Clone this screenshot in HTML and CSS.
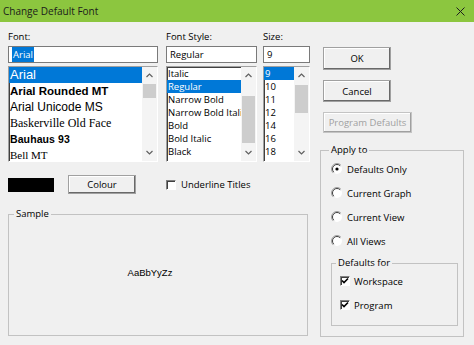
FILE: index.html
```html
<!DOCTYPE html>
<html>
<head>
<meta charset="utf-8">
<link rel="stylesheet" href="styles.css">
</head>
<body>
<div class="window">
  <div class="titlebar">
    <span class="title">Change Default Font</span>
    <svg class="close" width="9" height="9" viewBox="0 0 9 9"><path d="M0.5 0.5 L8.5 8.5 M8.5 0.5 L0.5 8.5" stroke="#1e1e1e" stroke-width="1" fill="none"/></svg>
  </div>
  <div class="content">
    <div class="left">
      <div class="pickers">
        <div class="picker p-font">
          <div class="label">Font:</div>
          <div class="edit"><span class="sel">Arial</span></div>
          <div class="listbox">
            <div class="items fonts">
              <div class="item hi f-arial">Arial</div>
              <div class="item f-rounded">Arial Rounded MT</div>
              <div class="item f-unicode">Arial Unicode MS</div>
              <div class="item f-bask">Baskerville Old Face</div>
              <div class="item f-bauhaus">Bauhaus 93</div>
              <div class="item f-bell">Bell MT</div>
            </div>
            <div class="vscroll">
              <div class="arrow"><svg width="7" height="5" viewBox="0 0 7 5"><path d="M0.5 4 L3.5 1 L6.5 4" stroke="#606060" stroke-width="1.2" fill="none"/></svg></div>
              <div class="track"><div class="thumb thumb-font"></div></div>
              <div class="arrow"><svg width="7" height="5" viewBox="0 0 7 5"><path d="M0.5 1 L3.5 4 L6.5 1" stroke="#606060" stroke-width="1.2" fill="none"/></svg></div>
            </div>
          </div>
        </div>
        <div class="picker p-style">
          <div class="label">Font Style:</div>
          <div class="edit">Regular</div>
          <div class="listbox">
            <div class="items small">
              <div class="item">Italic</div>
              <div class="item hi">Regular</div>
              <div class="item">Narrow Bold</div>
              <div class="item">Narrow Bold Italic</div>
              <div class="item">Bold</div>
              <div class="item">Bold Italic</div>
              <div class="item">Black</div>
            </div>
            <div class="vscroll">
              <div class="arrow"><svg width="7" height="5" viewBox="0 0 7 5"><path d="M0.5 4 L3.5 1 L6.5 4" stroke="#606060" stroke-width="1.2" fill="none"/></svg></div>
              <div class="track"><div class="thumb thumb-style"></div></div>
              <div class="arrow"><svg width="7" height="5" viewBox="0 0 7 5"><path d="M0.5 1 L3.5 4 L6.5 1" stroke="#606060" stroke-width="1.2" fill="none"/></svg></div>
            </div>
          </div>
        </div>
        <div class="picker p-size">
          <div class="label">Size:</div>
          <div class="edit">9</div>
          <div class="listbox">
            <div class="items small">
              <div class="item hi">9</div>
              <div class="item">10</div>
              <div class="item">11</div>
              <div class="item">12</div>
              <div class="item">14</div>
              <div class="item">16</div>
              <div class="item">18</div>
            </div>
            <div class="vscroll">
              <div class="arrow"><svg width="7" height="5" viewBox="0 0 7 5"><path d="M0.5 4 L3.5 1 L6.5 4" stroke="#606060" stroke-width="1.2" fill="none"/></svg></div>
              <div class="track"><div class="thumb thumb-size"></div></div>
              <div class="arrow"><svg width="7" height="5" viewBox="0 0 7 5"><path d="M0.5 1 L3.5 4 L6.5 1" stroke="#606060" stroke-width="1.2" fill="none"/></svg></div>
            </div>
          </div>
        </div>
      </div>

      <div class="row2">
        <div class="swatch"></div>
        <div class="btn btn-colour">Colour</div>
        <div class="check-row underline">
          <span class="cb"></span>
          <span>Underline Titles</span>
        </div>
      </div>

      <fieldset class="group sample">
        <legend>Sample</legend>
        <div class="sample-area"><span class="sample-text">AaBbYyZz</span></div>
      </fieldset>
    </div>

    <div class="right">
      <div class="btn btn-ok">OK</div>
      <div class="btn btn-cancel">Cancel</div>
      <div class="btn btn-progdef disabled">Program Defaults</div>

      <fieldset class="group apply">
        <legend>Apply to</legend>
        <div class="radios">
          <div class="radio-row">
            <svg width="12" height="12" viewBox="0 0 12 12"><circle cx="6" cy="6" r="5" fill="#ffffff"/><path d="M9.9 2.1 A5.5 5.5 0 0 0 2.1 9.9" stroke="#a0a0a0" stroke-width="1" fill="none"/><path d="M9.2 2.8 A4.5 4.5 0 0 0 2.8 9.2" stroke="#404040" stroke-width="1" fill="none"/><circle cx="6" cy="6" r="1.6" fill="#000"/></svg>
            <span>Defaults Only</span>
          </div>
          <div class="radio-row">
            <svg width="12" height="12" viewBox="0 0 12 12"><circle cx="6" cy="6" r="5" fill="#ffffff"/><path d="M9.9 2.1 A5.5 5.5 0 0 0 2.1 9.9" stroke="#a0a0a0" stroke-width="1" fill="none"/><path d="M9.2 2.8 A4.5 4.5 0 0 0 2.8 9.2" stroke="#404040" stroke-width="1" fill="none"/></svg>
            <span>Current Graph</span>
          </div>
          <div class="radio-row">
            <svg width="12" height="12" viewBox="0 0 12 12"><circle cx="6" cy="6" r="5" fill="#ffffff"/><path d="M9.9 2.1 A5.5 5.5 0 0 0 2.1 9.9" stroke="#a0a0a0" stroke-width="1" fill="none"/><path d="M9.2 2.8 A4.5 4.5 0 0 0 2.8 9.2" stroke="#404040" stroke-width="1" fill="none"/></svg>
            <span>Current View</span>
          </div>
          <div class="radio-row">
            <svg width="12" height="12" viewBox="0 0 12 12"><circle cx="6" cy="6" r="5" fill="#ffffff"/><path d="M9.9 2.1 A5.5 5.5 0 0 0 2.1 9.9" stroke="#a0a0a0" stroke-width="1" fill="none"/><path d="M9.2 2.8 A4.5 4.5 0 0 0 2.8 9.2" stroke="#404040" stroke-width="1" fill="none"/></svg>
            <span>All Views</span>
          </div>
        </div>

        <fieldset class="group defaults">
          <legend>Defaults for</legend>
          <div class="checks">
            <div class="check-row">
              <span class="cb"><svg width="8" height="8" viewBox="0 0 8 8"><path d="M1 3.5 L3 5.5 L7 1.5" stroke="#000" stroke-width="1.6" fill="none"/></svg></span>
              <span>Workspace</span>
            </div>
            <div class="check-row">
              <span class="cb"><svg width="8" height="8" viewBox="0 0 8 8"><path d="M1 3.5 L3 5.5 L7 1.5" stroke="#000" stroke-width="1.6" fill="none"/></svg></span>
              <span>Program</span>
            </div>
          </div>
        </fieldset>
      </fieldset>
    </div>
  </div>
</div>
</body>
</html>
```

FILE: styles.css
```css
html, body {
  margin: 0;
  padding: 0;
  background: #f0f0f0;
}
body {
  font-family: "Open Sans", "Noto Sans", sans-serif;
  font-size: 9.5px;
  color: #000;
}
.window {
  width: 474px;
  height: 345px;
  overflow: hidden;
  background: #f0f0f0;
}
.titlebar {
  height: 22px;
  background: #8cc63f;
  display: flex;
  align-items: center;
  justify-content: space-between;
  padding: 0 9px 0 3px;
}
.title {
  font-size: 10px;
  color: #1b1b1b;
}
.content {
  display: flex;
  padding: 8px 0 0 8px;
}
.left {
  width: 302px;
}
.pickers {
  display: flex;
}
.p-font { width: 150px; }
.p-style { width: 91px; margin-left: 8px; }
.p-size { width: 47px; margin-left: 6px; }

.label {
  height: 14px;
  line-height: 14px;
  margin-bottom: 2px;
}
.edit {
  height: 17px;
  box-sizing: border-box;
  border: 1px solid #7a7a7a;
  background: #fff;
  line-height: 15px;
  padding-left: 3px;
  margin-bottom: 3px;
  white-space: nowrap;
  overflow: hidden;
}
.sel {
  background: #0078d7;
  color: #fff;
  padding: 1px 1px;
}
.listbox {
  height: 96px;
  box-sizing: border-box;
  display: flex;
  background: #fff;
  border: 1px solid;
  border-color: #a0a0a0 #ffffff #ffffff #a0a0a0;
  box-shadow: inset 1px 1px #404040;
}
.items {
  flex: 1;
  overflow: hidden;
  min-width: 0;
}
.item {
  white-space: nowrap;
  padding-left: 1px;
}
.fonts .item {
  height: 16px;
  line-height: 16px;
  font-family: "Liberation Sans", Arial, sans-serif;
  font-size: 12px;
}
.fonts .f-arial { font-size: 13px; }
.fonts .f-rounded { font-weight: bold; font-size: 11.5px; }
.fonts .f-bask { font-family: "Liberation Serif", serif; font-size: 12px; }
.fonts .f-bauhaus { font-weight: 900; font-size: 10.5px; letter-spacing: 0.1px; }
.fonts .f-bell { font-family: "Liberation Serif", serif; font-size: 11px; }

.small .item {
  height: 13px;
  line-height: 13px;
}
.hi {
  background: #0078d7;
  color: #fff;
}
.vscroll {
  width: 15px;
  flex: none;
  display: flex;
  flex-direction: column;
  background: #f4f4f4;
}
.arrow {
  height: 17px;
  display: flex;
  align-items: center;
  justify-content: center;
}
.track {
  flex: 1;
}
.thumb {
  margin: 0 1px;
  background: #cdcdcd;
}
.thumb-font { margin-top: 0; height: 14px; }
.thumb-style { margin-top: 12px; height: 47px; }
.thumb-size { margin-top: 1px; height: 28px; }

.row2 {
  display: flex;
  align-items: center;
  height: 19px;
  margin-top: 13px;
}
.swatch {
  width: 46px;
  height: 14px;
  background: #000;
}
.btn {
  box-sizing: border-box;
  background: #f0f0f0;
  border: 1px solid #a0a0a0;
  box-shadow: inset -1px -1px #696969, inset 1px 1px #ffffff;
  display: flex;
  align-items: center;
  justify-content: center;
  white-space: nowrap;
}
.btn.disabled {
  color: #a0a0a0;
  border-color: #c4c4c4;
  box-shadow: inset -1px -1px #a0a0a0, inset 1px 1px #ffffff;
}
.btn-colour {
  margin-left: 14px;
  width: 68px;
  height: 19px;
}
.check-row {
  display: flex;
  align-items: center;
  gap: 5px;
  height: 16px;
}
.underline {
  margin-left: 30px;
}
.cb {
  width: 10px;
  height: 10px;
  box-sizing: border-box;
  background: #fff;
  border: 1px solid;
  border-color: #808080 #ffffff #ffffff #808080;
  box-shadow: inset 1px 1px #404040;
  display: flex;
  align-items: center;
  justify-content: center;
  flex: none;
}

.group {
  padding: 0;
  border: 1px solid #c2c2c2;
  min-width: 0;
  box-sizing: border-box;
}
.group legend {
  padding: 0 2px;
  height: 14px;
  line-height: 14px;
  margin-left: 8px;
}
.group.sample {
  margin: 13px 0 0 0;
  width: 300px;
  height: 129px;
}
.sample legend {
  margin-left: 5px;
}
.sample-area {
  height: 114px;
  display: flex;
  align-items: center;
  justify-content: center;
  padding: 0 16px 12px 0;
  box-sizing: border-box;
}
.sample-text {
  font-family: "Liberation Sans", Arial, sans-serif;
  font-size: 9.5px;
}

.right {
  margin-left: 10px;
  width: 144px;
}
.right .btn {
  margin-left: 3px;
}
.btn-ok { margin-top: 17px; width: 68px; height: 23px; }
.btn-cancel { margin-top: 10px; width: 68px; height: 22px; }
.btn-progdef { margin-top: 10px; width: 89px; height: 21px; }

.group.apply {
  margin: 10px 0 0 0;
  width: 144px;
  height: 194px;
}
.radios {
  padding: 4px 0 0 10px;
  display: flex;
  flex-direction: column;
  gap: 8px;
}
.radio-row {
  height: 16px;
  display: flex;
  align-items: center;
  gap: 4px;
}
.group.defaults {
  margin: 7px 0 0 10px;
  width: 127px;
  padding-bottom: 12px;
}
.defaults legend {
  margin-left: 4px;
}
.checks {
  padding: 3px 0 0 8px;
  display: flex;
  flex-direction: column;
  gap: 8px;
}
.checks .check-row {
  gap: 4px;
}
```
